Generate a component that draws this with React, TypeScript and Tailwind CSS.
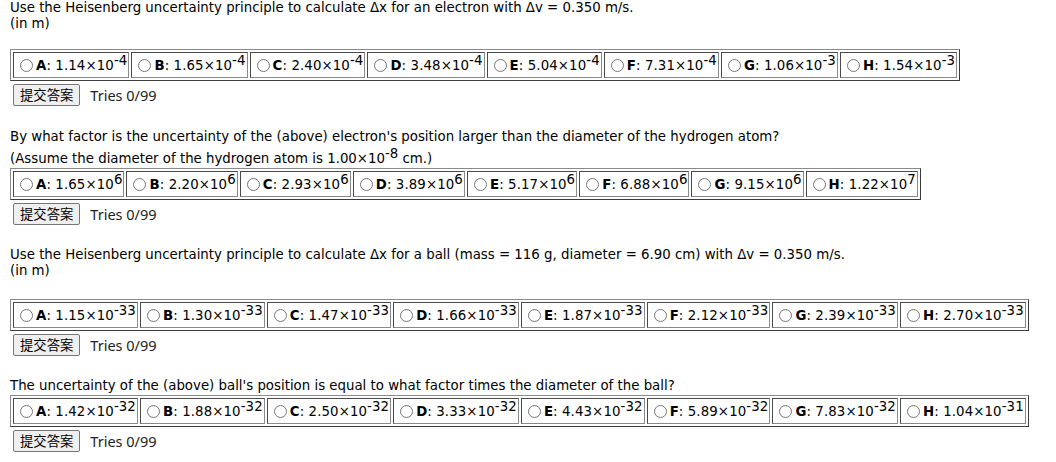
import React from "react";

type Option = { letter: string; mant: string; exp: string };

const mk = (vals: [string, string][]): Option[] =>
  vals.map(([mant, exp], i) => ({ letter: "ABCDEFGH"[i], mant, exp }));

const q1 = mk([["1.14","-4"],["1.65","-4"],["2.40","-4"],["3.48","-4"],["5.04","-4"],["7.31","-4"],["1.06","-3"],["1.54","-3"]]);
const q2 = mk([["1.65","6"],["2.20","6"],["2.93","6"],["3.89","6"],["5.17","6"],["6.88","6"],["9.15","6"],["1.22","7"]]);
const q3 = mk([["1.15","-33"],["1.30","-33"],["1.47","-33"],["1.66","-33"],["1.87","-33"],["2.12","-33"],["2.39","-33"],["2.70","-33"]]);
const q4 = mk([["1.42","-32"],["1.88","-32"],["2.50","-32"],["3.33","-32"],["4.43","-32"],["5.89","-32"],["7.83","-32"],["1.04","-31"]]);

function Choices({ name, options, className }: { name: string; options: Option[]; className?: string }) {
  return (
    <div className={"flex w-fit gap-[2px] p-[2px] border border-t-[#8a8a8a] border-l-[#8a8a8a] border-b-[#3c3c3c] border-r-[#3c3c3c] text-[13.33px] tracking-[0.1px] " + (className || "")}>
      {options.map((o) => (
        <label key={o.letter}
          className="flex items-start h-[26px] whitespace-nowrap border border-t-[#4a4a4a] border-l-[#4a4a4a] border-b-[#8a8a8a] border-r-[#8a8a8a] pt-[5px] px-px">
          <input type="radio" name={name} className="ml-[5px] mr-[3px] mt-px w-[13px] h-[13px] shrink-0" />
          <span className="leading-[16px]">
            <b className="font-bold">{o.letter}</b>: {o.mant}×10
            <sup className="text-[13.33px] -top-[5px]">{o.exp}</sup>
          </span>
        </label>
      ))}
    </div>
  );
}

function Submit({ className }: { className?: string }) {
  return (
    <div className={"flex items-center h-[22px] ml-[3px] " + (className || "")}>
      <button className="h-[22px] px-[6px] bg-[#efefef] border border-[#767676] rounded-[2px] text-[13.33px] leading-[16px] text-black [font-family:'Noto_Sans_CJK_SC',sans-serif]">
        提交答案
      </button>
      <span className="ml-[10px] text-[14.5px] leading-[16px] text-[#222] [font-family:'Noto_Sans',sans-serif]">Tries 0/99</span>
    </div>
  );
}

function Line({ children, className }: { children: React.ReactNode; className?: string }) {
  return <div className={"h-[16px] leading-[16px] whitespace-nowrap " + (className || "")}>{children}</div>;
}

export default function App() {
  return (
    <div className="px-[10px] text-[13.33px] leading-[16px] text-black bg-white h-[462px] overflow-hidden [font-family:'DejaVu_Sans',Verdana,sans-serif]">
      {/* question 1 */}
      <Line>Use the Heisenberg uncertainty principle to calculate Δx for an electron with Δv = 0.350 m/s.</Line>
      <Line>(in m)</Line>
      <div className="h-[16px]" />
      <Choices name="q1" options={q1} className="mt-px" />
      <Submit className="mt-[3px]" />

      {/* question 2 */}
      <Line className="mt-[23px]">By what factor is the uncertainty of the (above) electron's position larger than the diameter of the hydrogen atom?</Line>
      <div className="h-[22px] pt-[6px] leading-[16px] whitespace-nowrap">
        (Assume the diameter of the hydrogen atom is 1.00×10<sup className="text-[13.33px] -top-[5px]">-8</sup> cm.)
      </div>
      <Choices name="q2" options={q2} className="mt-px" />
      <Submit className="mt-[3px]" />

      {/* question 3 */}
      <Line className="mt-[22px]">Use the Heisenberg uncertainty principle to calculate Δx for a ball (mass = 116 g, diameter = 6.90 cm) with Δv = 0.350 m/s.</Line>
      <Line>(in m)</Line>
      <div className="h-[16px]" />
      <Choices name="q3" options={q3} className="mt-[4px]" />
      <Submit className="mt-[3px]" />

      {/* question 4 */}
      <Line className="mt-[22px]">The uncertainty of the (above) ball's position is equal to what factor times the diameter of the ball?</Line>
      <Choices name="q4" options={q4} className="mt-px" />
      <Submit className="mt-[3px]" />
    </div>
  );
}
